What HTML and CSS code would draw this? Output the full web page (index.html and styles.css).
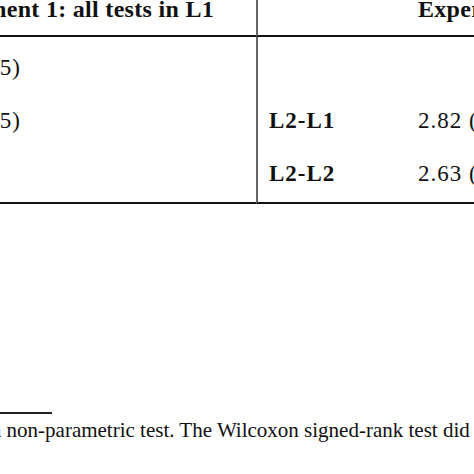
FILE: index.html
```html
<!DOCTYPE html>
<html lang="en">
<head>
<meta charset="utf-8">
<title>Table</title>
<link rel="stylesheet" href="styles.css">
</head>
<body>
<div class="tbl">
  <div class="cell head head-left">Experiment 1: all tests in L1</div>
  <div class="cell head head-right">Experiment 2: all tests in L2</div>

  <div class="cell body-left">2.96 (0.85)</div>
  <div class="cell label"></div>
  <div class="cell value"></div>

  <div class="cell body-left">2.88 (0.75)</div>
  <div class="cell label">L2-L1</div>
  <div class="cell value">2.82 (0.96)</div>

  <div class="cell body-left last"></div>
  <div class="cell label last">L2-L2</div>
  <div class="cell value last">2.63 (1.01)</div>
</div>
<div class="fn-rule"></div>
<p class="footnote">a non-parametric test. The Wilcoxon signed-rank test did not reveal</p>
</body>
</html>
```
FILE: styles.css
```css
html, body {
  margin: 0;
  padding: 0;
  background: #ffffff;
  overflow: hidden;
  width: 474px;
  height: 474px;
}

body {
  font-family: "Liberation Serif", "Times New Roman", serif;
  color: #111111;
}

.tbl {
  display: grid;
  grid-template-columns: 399px 162px 300px;
  margin-left: -143px;
  margin-top: -5px;
}

.cell {
  white-space: nowrap;
  font-size: 23px;
  line-height: 28px;
  letter-spacing: 1px;
}

.head {
  font-size: 24px;
  font-weight: bold;
  letter-spacing: 0.3px;
  padding-top: 0;
  padding-bottom: 12px;
  border-bottom: 2px solid #111111;
}

.head-left {
  text-align: right;
  padding-right: 42px;
}

.head-right {
  grid-column: span 2;
  border-left: 2px solid #666666;
  padding-left: 160px;
}

.body-left,
.label,
.value {
  padding-top: 17px;
  padding-bottom: 8px;
}

.body-left {
  text-align: right;
  padding-right: 235px;
}

.label {
  border-left: 2px solid #666666;
  padding-left: 11px;
  font-weight: bold;
}

.value {
  padding-left: 0;
}

.last {
  padding-bottom: 14px;
  border-bottom: 2px solid #111111;
}

.fn-rule {
  width: 52px;
  height: 2px;
  background: #222222;
  margin-top: 208px;
}

.footnote {
  margin: 4px 0 0 -8px;
  font-size: 21px;
  line-height: 24px;
  white-space: nowrap;
}
```
